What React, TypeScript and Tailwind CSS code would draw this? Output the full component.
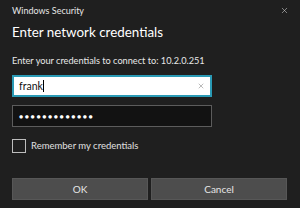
import { X } from 'lucide-react';

export default function App() {
  return (
    <div
      className="w-[300px] h-[208px] bg-[#1f1f1f] text-white flex flex-col px-3 overflow-hidden"
      style={{ fontFamily: 'Lato, "Noto Sans", sans-serif' }}
    >
      {/* Title bar */}
      <div className="flex items-center justify-between h-[19px] pt-[1px]">
        <span className="text-[9px] text-[#e6e6e6] leading-none">Windows Security</span>
        <X className="w-[9px] h-[9px] text-[#d0d0d0] mr-[-1px]" strokeWidth={1.5} />
      </div>

      <h1 className="mt-[6px] text-[13.4px] leading-[14px] font-normal text-white">Enter network credentials</h1>

      <p className="mt-[16px] text-[9.2px] leading-[12px] text-[#e8e8e8]">
        Enter your credentials to connect to: 10.2.0.251
      </p>

      {/* Username */}
      <div className="mt-[8px] w-[200px] h-[22px] bg-white border-2 border-[#2a9ab5] flex items-center pl-[5px] pr-[5px]">
        <span className="text-[10.5px] text-[#111] leading-none">frank</span>
        <span className="w-px h-[12px] bg-black"></span>
        <span className="flex-1"></span>
        <X className="w-[8px] h-[8px] text-[#777]" strokeWidth={1.5} />
      </div>

      {/* Password */}
      <div className="mt-[8px] w-[200px] h-[22px] bg-[#121212] border border-[#5c5c5c] flex items-center pl-[6px]">
        <span className="text-[7px] tracking-[1.6px] text-white leading-none">●●●●●●●●●●●●●</span>
      </div>

      {/* Checkbox */}
      <label className="mt-[12px] flex items-center gap-[5px]">
        <span className="w-[14px] h-[14px] border-[1.5px] border-[#bdbdbd]"></span>
        <span className="text-[9.5px] text-[#e0e0e0] leading-none">Remember my credentials</span>
      </label>

      {/* Buttons */}
      <div className="mt-[25px] flex gap-[3px]">
        <button className="w-[136px] h-[22px] bg-[#4d4d4d] border border-[#575757] text-[10px] text-[#e6e6e6]">OK</button>
        <button className="w-[136px] h-[22px] bg-[#4d4d4d] border border-[#575757] text-[10px] text-[#e6e6e6]">Cancel</button>
      </div>
    </div>
  );
}
